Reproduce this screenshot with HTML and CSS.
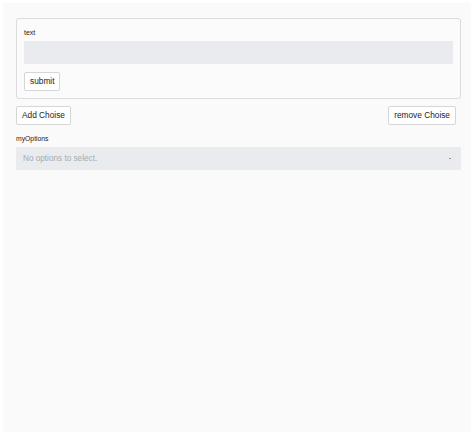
FILE: index.html
```html
<!DOCTYPE html>
<html>
<head>
<meta charset="utf-8">
<link rel="stylesheet" href="styles.css">
</head>
<body>
<div class="app">
  <div class="card">
    <div class="label">text</div>
    <div class="input"></div>
    <button class="btn">submit</button>
  </div>
  <div class="actions">
    <button class="btn">Add Choise</button>
    <button class="btn remove">remove Choise</button>
  </div>
  <div class="label opts">myOptions</div>
  <div class="select">
    <span class="placeholder">No options to select.</span>
    <span class="caret"></span>
  </div>
</div>
</body>
</html>
```
FILE: styles.css
```css
html, body { margin: 0; padding: 0; background: #ffffff; }
body { font-family: "Liberation Sans", Arial, sans-serif; color: #222; }
.app {
  margin: 3px;
  height: 429px;
  background: #fafafa;
  padding: 15px 10px 0 13px;
  box-sizing: border-box;
  display: flex;
  flex-direction: column;
}
.card {
  border: 1px solid #dcdcdc;
  border-radius: 3px;
  background: #fbfbfb;
  padding: 9px 7px 7px 7px;
  display: flex;
  flex-direction: column;
  align-items: flex-start;
}
.label { font-size: 7px; color: #222; line-height: 9px; }
.input {
  align-self: stretch;
  height: 23px;
  margin-top: 4px;
  background: #e9ebee;
}
.btn {
  font-family: inherit;
  font-size: 8.3px;
  color: #222;
  background: #fff;
  border: 1px solid #d6d6d6;
  border-radius: 2px;
  height: 19px;
  padding: 0 5px;
  line-height: 17px;
}
.card .btn { margin-top: 8px; }
.actions {
  display: flex;
  justify-content: space-between;
  margin-top: 7px;
}
.remove { margin-right: 5px; }
.opts { margin-top: 9px; font-size: 6.8px; }
.select {
  margin-top: 4px;
  height: 23px;
  background: #e9ebee;
  display: flex;
  align-items: center;
  justify-content: space-between;
  padding: 0 10px 0 7px;
}
.placeholder { font-size: 8.2px; color: #a6abb2; }
.caret { width: 2px; height: 1px; background: #999; }
```
